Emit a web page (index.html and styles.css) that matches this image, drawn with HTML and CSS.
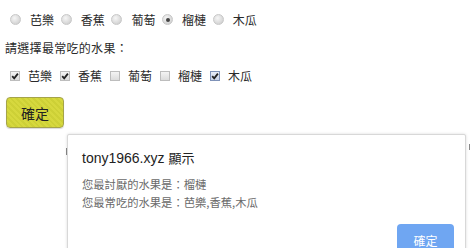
FILE: index.html
```html
<!DOCTYPE html>
<html>
<head>
<meta charset="utf-8">
<link rel="stylesheet" href="styles.css">
</head>
<body>
<div class="page">
  <div class="row radios">
    <label class="opt"><span class="radio"></span><span class="lbl">芭樂</span></label>
    <label class="opt"><span class="radio"></span><span class="lbl">香蕉</span></label>
    <label class="opt"><span class="radio"></span><span class="lbl">葡萄</span></label>
    <label class="opt"><span class="radio on"></span><span class="lbl">榴槤</span></label>
    <label class="opt"><span class="radio"></span><span class="lbl">木瓜</span></label>
  </div>
  <div class="prompt">請選擇最常吃的水果：</div>
  <div class="row checks">
    <label class="opt"><span class="check"><svg viewBox="0 0 10 10" width="10" height="10"><path d="M2.2 5.2 L4.2 7.3 L7.9 2.6" fill="none" stroke="#222" stroke-width="1.8"/></svg></span><span class="lbl">芭樂</span></label>
    <label class="opt"><span class="check"><svg viewBox="0 0 10 10" width="10" height="10"><path d="M2.2 5.2 L4.2 7.3 L7.9 2.6" fill="none" stroke="#222" stroke-width="1.8"/></svg></span><span class="lbl">香蕉</span></label>
    <label class="opt"><span class="check"></span><span class="lbl">葡萄</span></label>
    <label class="opt"><span class="check"></span><span class="lbl">榴槤</span></label>
    <label class="opt"><span class="check focus"><svg viewBox="0 0 10 10" width="10" height="10"><path d="M2.2 5.2 L4.2 7.3 L7.9 2.6" fill="none" stroke="#222" stroke-width="1.8"/></svg></span><span class="lbl">木瓜</span></label>
  </div>
  <button class="submit">確定</button>
</div>
<span class="peek peek-left"></span>
<span class="peek peek-right"></span>
<div class="dialog">
  <div class="title">tony1966.xyz <span class="cjk">顯示</span></div>
  <div class="msg">您最討厭的水果是：榴槤</div>
  <div class="msg">您最常吃的水果是：芭樂,香蕉,木瓜</div>
  <div class="actions"><button class="ok">確定</button></div>
</div>
</body>
</html>
```
FILE: styles.css
```css
html, body {
  margin: 0;
  padding: 0;
  background: #fff;
}
body {
  font-family: "Noto Sans CJK TC", "Noto Sans", sans-serif;
  font-size: 12px;
  color: #2a2a2a;
  width: 474px;
  height: 248px;
  overflow: hidden;
  position: relative;
}
.page {
  padding: 10px 0 0 0;
}
.row {
  display: flex;
  align-items: center;
  height: 19px;
  padding-left: 10px;
}
.opt {
  display: flex;
  align-items: center;
  flex: none;
}
.radios .opt { width: 50.7px; }
.radio {
  width: 11px;
  height: 11px;
  border-radius: 50%;
  margin-right: 9px;
  background: radial-gradient(circle at 40% 35%, #f6f6f6 0%, #dadada 60%, #c6c6c6 100%);
  border: 1px solid #c8c8c8;
  box-sizing: border-box;
  position: relative;
  flex: none;
}
.radio.on::after {
  content: "";
  position: absolute;
  left: 2.5px;
  top: 2.5px;
  width: 4px;
  height: 4px;
  border-radius: 50%;
  background: #444;
}
.prompt {
  margin-top: 9px;
  padding-left: 5px;
  height: 19px;
  line-height: 19px;
  letter-spacing: 0.3px;
}
.checks {
  margin-top: 9px;
}
.checks .opt { width: 50px; }
.check {
  width: 10px;
  height: 10px;
  margin-right: 8px;
  border: 1px solid #bdbdbd;
  background: linear-gradient(#f4f4f4, #dcdcdc);
  box-sizing: border-box;
  position: relative;
  flex: none;
}
.check svg {
  position: absolute;
  left: -1px;
  top: -1px;
}
.check.focus {
  border-color: #7f92b8;
  background: linear-gradient(#e8edf7, #c9d3e8);
}
.lbl {
  white-space: nowrap;
}
.submit {
  display: block;
  margin-top: 12px;
  margin-left: 6px;
  width: 58px;
  height: 31px;
  border: 1px solid #a5a44a;
  border-radius: 4px;
  background: repeating-linear-gradient(45deg, #d6d83e 0 2px, #cdd036 2px 4px);
  font-family: "Noto Sans CJK TC", sans-serif;
  font-size: 14px;
  color: #222;
  padding: 0;
  box-shadow: 0 1px 1px rgba(0,0,0,0.15);
}
.peek {
  position: absolute;
  width: 1px;
  background: #888;
}
.peek-left { left: 66px; top: 148px; height: 7px; }
.peek-right { left: 469px; top: 144px; height: 6px; }
.dialog {
  position: absolute;
  left: 67px;
  top: 134px;
  width: 399px;
  height: 130px;
  background: #fff;
  border: 1px solid #d8d8d8;
  border-radius: 2px;
  box-shadow: 0 0 3px rgba(0,0,0,0.15);
  box-sizing: border-box;
  padding: 12px 11px 0 14px;
}
.title {
  font-family: "Liberation Sans", Arial, sans-serif;
  font-size: 14px;
  color: #222;
  height: 22px;
  line-height: 22px;
  margin-bottom: 6px;
}
.title .cjk {
  font-family: "Noto Sans CJK TC", sans-serif;
  font-size: 13px;
}
.msg {
  font-size: 11.3px;
  color: #6a6a6a;
  line-height: 18px;
  font-family: "Noto Sans CJK TC", sans-serif;
}
.actions {
  display: flex;
  justify-content: flex-end;
  margin-top: 13px;
}
.ok {
  width: 57px;
  height: 32px;
  border: none;
  border-radius: 4px;
  background: #6fa6f2;
  color: #fff;
  font-size: 12px;
  font-family: "Noto Sans CJK TC", sans-serif;
  padding: 0;
}
```
